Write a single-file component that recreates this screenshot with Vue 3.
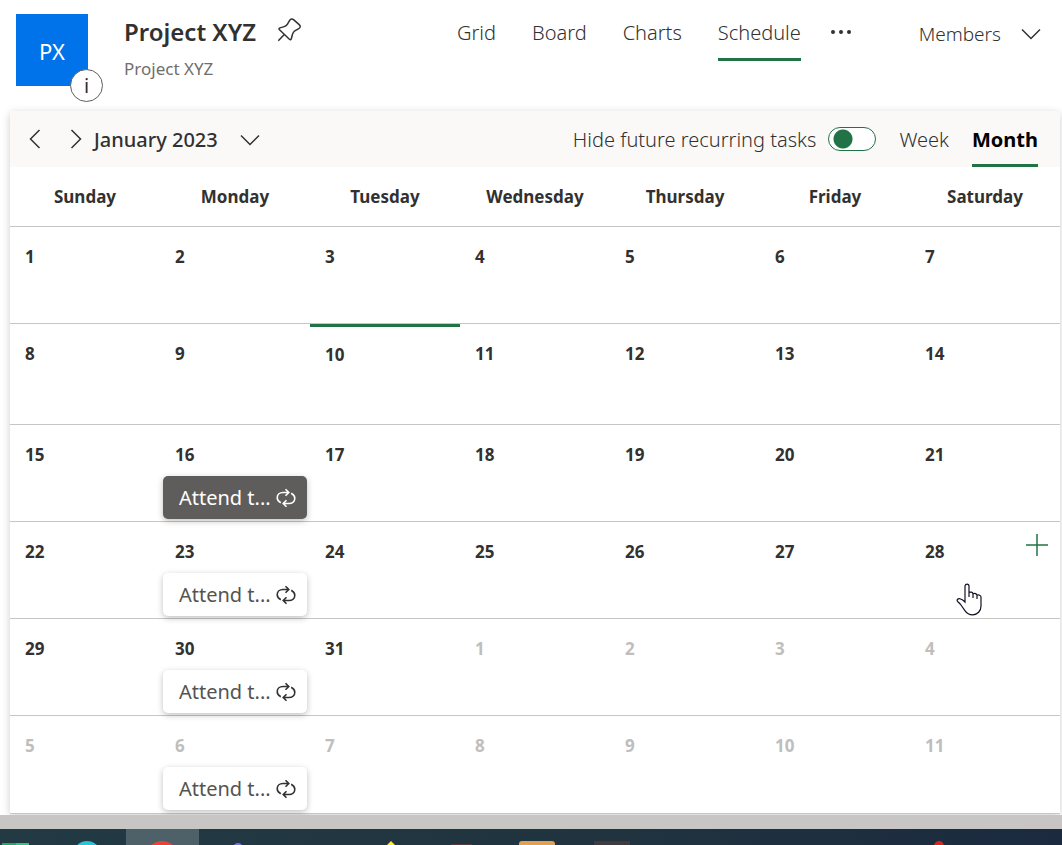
<script setup>
import { ref } from 'vue'

const tabs = ['Grid', 'Board', 'Charts', 'Schedule']
const activeTab = ref('Schedule')
const view = ref('Month')
const hideFuture = ref(false)

const weekdays = ['Sunday', 'Monday', 'Tuesday', 'Wednesday', 'Thursday', 'Friday', 'Saturday']
const eventDays = [15, 22, 29, 36]

const weeks = Array.from({ length: 6 }, (_, w) =>
  Array.from({ length: 7 }, (_, d) => {
    const index = w * 7 + d
    return {
      label: index < 31 ? index + 1 : index - 30,
      muted: index >= 31,
      today: index === 9,
      hovered: index === 27,
      event: eventDays.includes(index),
      selected: index === 15
    }
  })
)
</script>

<template>
  <div class="page">
    <header class="header">
      <div class="avatar">
        PX
        <button class="info" type="button" aria-label="Plan information">i</button>
      </div>
      <div class="titles">
        <div class="title-row">
          <h1>Project XYZ</h1>
          <button class="bare pin" type="button" aria-label="Pin plan">
            <svg width="24" height="24" viewBox="0 0 24 24">
              <path d="M12.800 2.200C13.700.9 15.400.7 16.800 1.900L22.200 6.600C23.700 8 23.500 9.700 21.800 10.600L17.800 12.800C16 13.800 15.800 15 15.300 17L14.300 20.800C14 21.900 13.200 22 12.400 21.300L2.500 11.800C1.700 11 1.900 10.200 2.900 9.900L6.500 8.900C8.500 8.300 9.400 7.800 10.300 6.300ZM7.300 16.600L1.300 22.800" />
            </svg>
          </button>
        </div>
        <p>Project XYZ</p>
      </div>
      <nav class="tabs">
        <button
          v-for="tab in tabs"
          :key="tab"
          type="button"
          class="bare tab"
          :class="{ active: tab === activeTab }"
          @click="activeTab = tab"
        >{{ tab }}</button>
        <button class="bare more" type="button" aria-label="More">
          <svg width="20" height="6" viewBox="0 0 20 6">
            <circle cx="2" cy="3" r="2" /><circle cx="10" cy="3" r="2" /><circle cx="18" cy="3" r="2" />
          </svg>
        </button>
      </nav>
      <button class="bare members" type="button">
        Members
        <svg class="line" width="20" height="12" viewBox="0 0 20 12"><path d="M1 1.500l9 9 9-9" /></svg>
      </button>
    </header>

    <main class="card">
      <div class="toolbar">
        <button class="bare prev" type="button" aria-label="Previous month">
          <svg class="line" width="12" height="20" viewBox="0 0 12 20"><path d="M10.500 1L1.500 10l9 9" /></svg>
        </button>
        <button class="bare next" type="button" aria-label="Next month">
          <svg class="line" width="12" height="20" viewBox="0 0 12 20"><path d="M1.500 1l9 9-9 9" /></svg>
        </button>
        <button class="bare month" type="button">
          January 2023
          <svg class="line" width="20" height="12" viewBox="0 0 20 12"><path d="M1 1.500l9 9 9-9" /></svg>
        </button>
        <label class="hide-label">
          Hide future recurring tasks
          <input v-model="hideFuture" class="switch" type="checkbox" role="switch" />
        </label>
        <button
          v-for="name in ['Week', 'Month']"
          :key="name"
          type="button"
          class="bare view"
          :class="{ active: name === view }"
          @click="view = name"
        >{{ name }}</button>
      </div>

      <table class="calendar">
        <thead>
          <tr>
            <th v-for="day in weekdays" :key="day" scope="col">{{ day }}</th>
          </tr>
        </thead>
        <tbody>
          <tr v-for="(week, w) in weeks" :key="w">
            <td v-for="(day, d) in week" :key="d" :class="{ muted: day.muted, today: day.today }">
              <div class="day-head">
                <span>{{ day.label }}</span>
                <button v-if="day.hovered" class="bare add" type="button" aria-label="Add task">
                  <svg width="24" height="24" viewBox="0 0 24 24"><path d="M12 1v22M1 12h22" /></svg>
                </button>
              </div>
              <button v-if="day.event" class="task" :class="{ selected: day.selected }" type="button">
                <span>Attend t...</span>
                <svg width="20" height="20" viewBox="0 0 20 20">
                  <path d="M4.800 14.800C2.500 13.500 1.200 11.800 1.200 9.700C1.200 6.500 3.800 4.500 7 4.500H12.800M9.500 1.200L12.800 4.500 9.500 7.800M15.200 5.200C17.500 6.500 18.800 8.200 18.800 10.300C18.800 13.500 16.200 15.500 13 15.500H7.200M10.500 12.200L7.200 15.500 10.500 18.800" />
                </svg>
              </button>
              <svg v-if="day.hovered" class="pointer" width="26" height="33" viewBox="0 0 26 33">
                <path d="M9 19V3.200C9 .4 13 .4 13 3.200V14 9.500c1.500-.9 3.800-.4 4 1.200V15v-4.200c1.500-.8 3.800-.2 4 1.400V16v-3.700c1.600-.8 4-.1 4 1.900V23c0 5-3.500 8.800-8.500 8.800-3.500 0-5.700-1.500-7.600-4.200L5 22c-1.100-1.500-2.500-2.500-3.500-3.700-1-1.400.5-3.200 2.500-2.600 2 .6 3.700 1.800 5 3.300z" />
              </svg>
            </td>
          </tr>
        </tbody>
      </table>
    </main>

    <div class="scrollbar"></div>
    <footer class="taskbar">
      <svg width="100%" height="16">
        <rect x="2" y="14" width="14" height="2" fill="#24a866" /><rect x="16" y="14" width="13" height="2" fill="#33c481" />
        <circle cx="87" cy="26" r="14" fill="#2fc1d8" />
        <rect x="126" width="73" height="16" fill="#4e6169" />
        <circle cx="162" cy="28" r="16" fill="#ea4335" />
        <circle cx="238" cy="19" r="5" fill="#7b72ea" />
        <path d="M387 16l4-4 4 4z" fill="#ffe83b" />
        <rect x="451" y="15" width="21" height="1" fill="#5b3540" />
        <rect x="519" y="12" width="36" height="8" rx="3" fill="#dfa254" />
        <rect x="594" y="12" width="36" height="4" fill="#433a3e" />
        <circle cx="939" cy="17" r="5" fill="#d02a1e" />
      </svg>
    </footer>
  </div>
</template>

<style>
body {
  background: #fff;
}
</style>

<style scoped>
.page {
  overflow: hidden;
  font-family: "Noto Sans", "Open Sans", sans-serif;
  font-size: 20px;
  color: #323130;
}

.bare {
  padding: 0;
  border: 0;
  background: none;
  font: inherit;
  color: inherit;
  cursor: pointer;
}

svg {
  display: block;
  flex: none;
}

.line {
  fill: none;
  stroke: #323130;
  stroke-width: 1.5;
}

.header {
  display: flex;
  align-items: flex-start;
  height: 97px;
  padding: 14px 21px 0 16px;
}

.avatar {
  position: relative;
  width: 72px;
  height: 72px;
  flex: none;
  background: #0073ea;
  color: #fff;
  font-size: 22px;
  font-weight: 400;
  line-height: 74px;
  text-align: center;
}

.info {
  position: absolute;
  left: 54px;
  top: 55px;
  width: 33px;
  height: 33px;
  padding: 0;
  border: 1px solid #605e5c;
  border-radius: 50%;
  background: #fff;
  color: #323130;
  font: inherit;
  font-size: 20px;
  line-height: 30px;
}

.titles {
  margin-left: 36px;
  width: 333px;
}

.title-row {
  display: flex;
  align-items: center;
  gap: 21px;
  height: 36px;
}

h1 {
  margin: 0;
  font-size: 24px;
  font-weight: 600;
  line-height: 36px;
}

.pin {
  margin-top: -4px;
}

.pin svg {
  fill: none;
  stroke: #323130;
  stroke-width: 1.5;
  stroke-linejoin: round;
}

.titles p {
  margin: 6px 0 0;
  color: #706e6c;
  font-size: 17px;
  line-height: 26px;
}

.tabs {
  display: flex;
  align-items: flex-start;
  gap: 36px;
  font-weight: 300;
}

.tab {
  height: 47px;
  padding-bottom: 8px;
  border-bottom: 3px solid transparent;
}

.tab.active {
  border-color: #217346;
}

.more {
  margin: 15px 0 0 -6px;
}

.more svg {
  fill: #323130;
}

.members {
  display: flex;
  align-items: center;
  gap: 20px;
  height: 40px;
  margin-left: auto;
  font-size: 19px;
  font-weight: 300;
}

.card {
  margin: 0 2px 0 10px;
  border-radius: 4px;
  box-shadow: 0 2px 8px rgba(0, 0, 0, 0.2);
}

.toolbar {
  display: flex;
  align-items: center;
  height: 56px;
  padding: 0 22px 0 19px;
  background: #faf9f8;
}

.next {
  margin-left: 29px;
}

.month {
  display: flex;
  align-items: center;
  gap: 22px;
  margin-left: 12px;
  padding-top: 2px;
  font-weight: 500;
  line-height: 54px;
}

.hide-label {
  display: flex;
  align-items: center;
  gap: 12px;
  margin-left: auto;
  font-weight: 300;
}

.switch {
  appearance: none;
  width: 48px;
  height: 24px;
  margin: 0;
  border: 1px solid #217346;
  border-radius: 12px;
  background: radial-gradient(circle at 14px 11px, #217346 9px, #fff 10px);
}

.switch:checked {
  background: radial-gradient(circle at 32px 11px, #217346 9px, #fff 10px);
}

.view {
  height: 56px;
  margin-left: 23px;
  padding-top: 4px;
  border-bottom: 3px solid transparent;
  font-weight: 300;
}

.view.active {
  border-color: #217346;
  color: #000;
  font-weight: 700;
}

.calendar {
  width: 100%;
  table-layout: fixed;
  border-spacing: 0;
  background: #fff;
  font-size: 17px;
}

th,
td {
  box-sizing: border-box;
  padding: 0;
  border-bottom: 1px solid #c8c6c4;
}

th {
  height: 60px;
  font-weight: 700;
}

td {
  position: relative;
  height: 97px;
  vertical-align: top;
  font-weight: 700;
}

tbody tr:nth-child(2) td {
  height: 101px;
}

tbody tr:last-child td {
  height: 98px;
}

td.today::before {
  content: "";
  display: block;
  height: 3px;
  margin-bottom: -2px;
  background: #217346;
}

.muted {
  color: #c0bebc;
}

.day-head {
  display: flex;
  justify-content: space-between;
  height: 51px;
  padding: 17px 11px 0 15px;
  box-sizing: border-box;
  line-height: 26px;
}

.add {
  height: 24px;
  margin-top: -6px;
}

.add svg {
  fill: none;
  stroke: #217346;
  stroke-width: 1.5;
}

.task {
  display: flex;
  align-items: center;
  justify-content: space-between;
  width: calc(100% - 6px);
  height: 43px;
  margin: 0 3px;
  padding: 0 11px 0 16px;
  border: 0;
  border-radius: 5px;
  background: #fff;
  box-shadow: 0 2px 6px rgba(0, 0, 0, 0.25);
  color: #555351;
  font: inherit;
  font-size: 20px;
  font-weight: 400;
}

.task svg {
  fill: none;
  stroke: #323130;
  stroke-width: 1.6;
}

.task.selected {
  background: #5f5d5b;
  color: #fff;
}

.task.selected svg {
  stroke: #fff;
}

.pointer {
  position: absolute;
  left: 46px;
  top: 61px;
  fill: #fff;
  stroke: #111122;
  stroke-width: 1.2;
  pointer-events: none;
}

.scrollbar {
  position: relative;
  height: 14px;
  margin-top: 1px;
  background: #c8c6c4;
}

.taskbar {
  position: relative;
  height: 16px;
  background: linear-gradient(90deg, #223a43, #20333f 60%, #1b2a3f);
}
</style>
